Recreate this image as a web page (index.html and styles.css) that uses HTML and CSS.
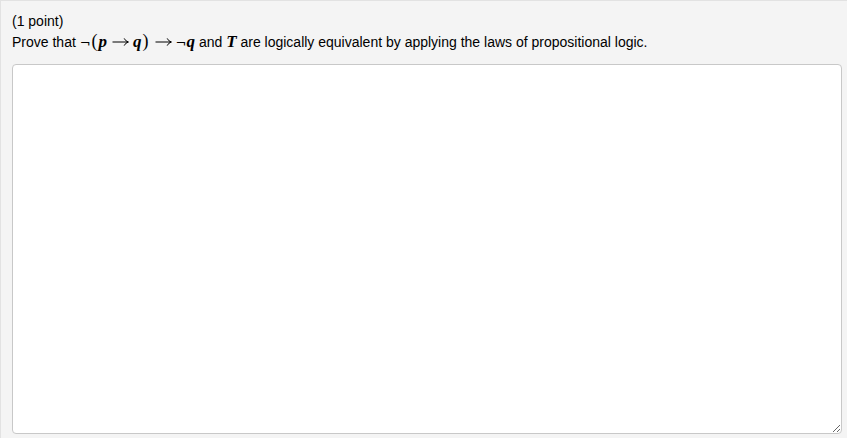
FILE: index.html
```html
<!DOCTYPE html>
<html lang="en">
<head>
    <meta charset="UTF-8">
    <meta name="viewport" content="width=device-width, initial-scale=1.0">
    <title>Problem</title>
    <link rel="stylesheet" href="styles.css">
</head>
<body>
    <div class="problem">
        <div class="points">(1 point)</div>
        <div class="question">
            Prove that
            <span class="math"><span class="op">¬</span><span class="paren">(</span><span class="var">p</span><svg class="arrow" width="17" height="10" viewBox="0 0 17 10"><path d="M0.5 5 H16.2 M12.2 1.4 Q13.4 4.2 16.4 5 Q13.4 5.8 12.2 8.6"/></svg><span class="var">q</span><span class="paren">)</span><svg class="arrow" width="17" height="10" viewBox="0 0 17 10"><path d="M0.5 5 H16.2 M12.2 1.4 Q13.4 4.2 16.4 5 Q13.4 5.8 12.2 8.6"/></svg><span class="op">¬</span><span class="var">q</span></span>
            and <span class="math"><span class="var">T</span></span>
            are logically equivalent by applying the laws of propositional logic.
        </div>
        <textarea class="answer"></textarea>
    </div>
</body>
</html>
```

FILE: styles.css
```css
html, body {
    margin: 0;
    padding: 0;
    height: 100%;
}
body {
    font-family: "Liberation Sans", Arial, sans-serif;
    font-size: 14px;
    color: #000;
    background-color: #f4f4f4;
}
.problem {
    box-sizing: border-box;
    height: 100%;
    border-top: 1px solid #e2e2e2;
    border-left: 1px solid #e2e2e2;
    padding: 11px 5px 4px 11px;
    display: flex;
    flex-direction: column;
}
.points {
    line-height: 18px;
}
.question {
    line-height: 22px;
}
.math {
    font-family: "Liberation Serif", "Times New Roman", serif;
    font-size: 17px;
    white-space: nowrap;
}
.var {
    font-style: italic;
    font-weight: bold;
}
.paren {
    font-size: 18px;
    margin: 0 1px;
}
.op {
    font-family: "DejaVu Sans", sans-serif;
    font-size: 13px;
}
.arrow {
    margin: 0 4px 0 5px;
    vertical-align: 0;
    fill: none;
    stroke: #000;
    stroke-width: 1;
}
.answer {
    flex: 1;
    margin-top: 10px;
    box-sizing: border-box;
    width: 100%;
    border: 1px solid #c8c8c8;
    border-radius: 4px;
    background: #fff;
    resize: both;
    font-family: "Liberation Sans", Arial, sans-serif;
}
```
